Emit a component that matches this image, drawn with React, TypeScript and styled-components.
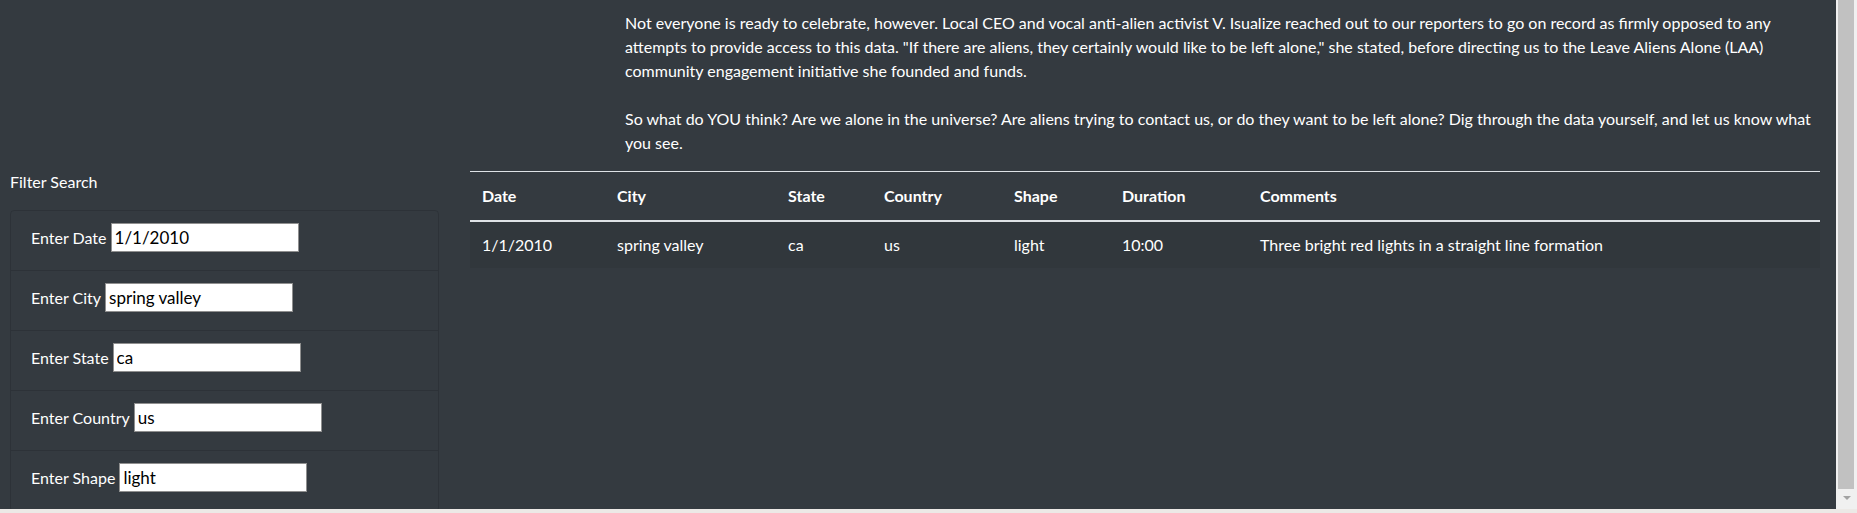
import React from "react";
import styled, { createGlobalStyle } from "styled-components";

const GlobalStyle = createGlobalStyle`
  html, body {
    margin: 0;
    padding: 0;
    overflow: hidden;
  }
  body {
    font-family: Lato, "Liberation Sans", sans-serif;
    font-size: 16px;
    line-height: 1.5;
    color: #fff;
    background: #ece9e6;
  }
`;

interface Sighting {
  datetime: string;
  city: string;
  state: string;
  country: string;
  shape: string;
  durationMinutes: string;
  comments: string;
}

const sightings: Sighting[] = [
  {
    datetime: "1/1/2010",
    city: "spring valley",
    state: "ca",
    country: "us",
    shape: "light",
    durationMinutes: "10:00",
    comments: "Three bright red lights in a straight line formation",
  },
];

const filters = [
  { label: "Enter Date", value: "1/1/2010" },
  { label: "Enter City", value: "spring valley" },
  { label: "Enter State", value: "ca" },
  { label: "Enter Country", value: "us" },
  { label: "Enter Shape", value: "light" },
];

const columns = [
  { title: "Date", width: 135 },
  { title: "City", width: 171 },
  { title: "State", width: 96 },
  { title: "Country", width: 130 },
  { title: "Shape", width: 108 },
  { title: "Duration", width: 138 },
  { title: "Comments", width: 0 },
];

const App = () => {
  return (
    <>
      <GlobalStyle />
      <Window>
        <Main>
          <LeftCol>
            <FilterTitle>Filter Search</FilterTitle>
            <FilterCard>
              {filters.map((f) => (
                <FilterItem key={f.label}>
                  <FilterLabel>{f.label}</FilterLabel>
                  <FilterInput type="text" defaultValue={f.value} />
                </FilterItem>
              ))}
            </FilterCard>
          </LeftCol>
          <RightCol>
            <Article>
              <Para>
                Not everyone is ready to celebrate, however. Local CEO and vocal
                anti-alien activist V. Isualize reached out to our reporters to go
                on record as firmly opposed to any attempts to provide access to
                this data. "If there are aliens, they certainly would like to be
                left alone," she stated, before directing us to the Leave Aliens
                Alone (LAA) community engagement initiative she founded and funds.
              </Para>
              <Para>
                So what do YOU think? Are we alone in the universe? Are aliens
                trying to contact us, or do they want to be left alone? Dig
                through the data yourself, and let us know what you see.
              </Para>
            </Article>
            <Table>
              <thead>
                <tr>
                  {columns.map((c) => (
                    <Th key={c.title} style={c.width ? { width: c.width } : undefined}>
                      {c.title}
                    </Th>
                  ))}
                </tr>
              </thead>
              <tbody>
                {sightings.map((s, i) => (
                  <Row key={i} $striped={i % 2 === 0}>
                    <Td>{s.datetime}</Td>
                    <Td>{s.city}</Td>
                    <Td>{s.state}</Td>
                    <Td>{s.country}</Td>
                    <Td>{s.shape}</Td>
                    <Td>{s.durationMinutes}</Td>
                    <Td>{s.comments}</Td>
                  </Row>
                ))}
              </tbody>
            </Table>
          </RightCol>
        </Main>
        <ScrollTrack>
          <ScrollThumb />
          <ScrollArrow />
        </ScrollTrack>
      </Window>
      <BottomStrip />
    </>
  );
};

export default App;

const Window = styled.div`
  display: flex;
  width: 1857px;
  height: 509px;
  overflow: hidden;
`;

const Main = styled.div`
  display: flex;
  align-items: flex-start;
  width: 1836px;
  height: 509px;
  background: #343a40;
  overflow: hidden;
  padding-left: 10px;
  box-sizing: border-box;
`;

const LeftCol = styled.div`
  width: 429px;
  padding-top: 170px;
  flex-shrink: 0;
`;

const FilterTitle = styled.div`
  margin-bottom: 16px;
`;

const FilterCard = styled.ul`
  list-style: none;
  margin: 0;
  padding: 0;
  border: 1px solid rgba(0, 0, 0, 0.125);
  border-radius: 4px;
`;

const FilterItem = styled.li`
  display: flex;
  align-items: baseline;
  box-sizing: border-box;
  height: 60px;
  padding: 12px 20px 0;
  border-bottom: 1px solid rgba(0, 0, 0, 0.125);
  white-space: nowrap;

  &:last-child {
    border-bottom: none;
  }
`;

const FilterLabel = styled.label`
  margin-right: 4px;
`;

const FilterInput = styled.input`
  width: 188px;
  height: 29px;
  box-sizing: border-box;
  padding: 1px 3px;
  border: 1px solid #8f8f8f;
  background: #fff;
  color: #000;
  font: inherit;
  font-size: 17px;
  outline: none;
`;

const RightCol = styled.div`
  width: 1351px;
  margin-left: 31px;
  flex-shrink: 0;
`;

const Article = styled.div`
  margin-left: 155px;
  padding-top: 11px;
`;

const Para = styled.p`
  margin: 0 0 24px;

  &:last-child {
    margin-bottom: 16px;
  }
`;

const Table = styled.table`
  width: 1350px;
  table-layout: fixed;
  border-collapse: collapse;
  color: #fff;
`;

const Th = styled.th`
  box-sizing: border-box;
  text-align: left;
  font-weight: 700;
  padding: 12px;
  vertical-align: bottom;
  border-top: 1px solid #dee2e6;
  border-bottom: 2px solid #dee2e6;
`;

const Row = styled.tr<{ $striped: boolean }>`
  background: ${(p) => (p.$striped ? "rgba(0, 0, 0, 0.05)" : "transparent")};
`;

const Td = styled.td`
  padding: 11px 12px;
  vertical-align: top;
`;

const ScrollTrack = styled.div`
  position: relative;
  width: 21px;
  height: 509px;
  background: #f0f0f0;
  flex-shrink: 0;
`;

const ScrollThumb = styled.div`
  margin-left: 2px;
  width: 16px;
  height: 489px;
  background: #c1c1c1;
`;

const ScrollArrow = styled.div`
  margin: 7px 0 0 7px;
  width: 0;
  height: 0;
  border-left: 4px solid transparent;
  border-right: 4px solid transparent;
  border-top: 4px solid #a3a3a3;
`;

const BottomStrip = styled.div`
  height: 4px;
  background: #ece9e6;
`;
